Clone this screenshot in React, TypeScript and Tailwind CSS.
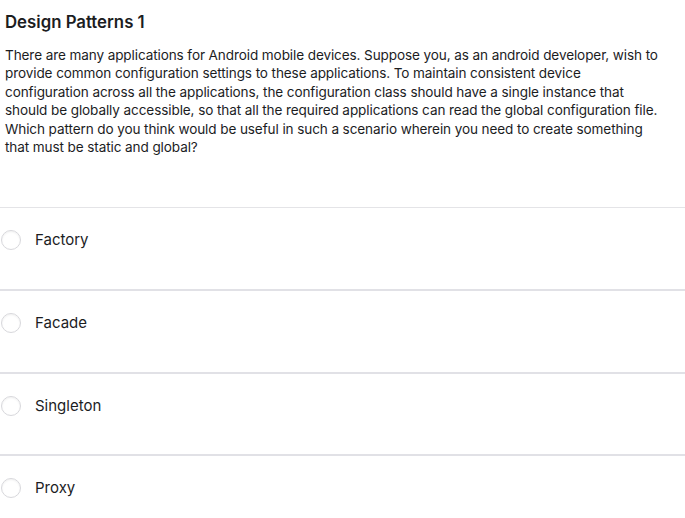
import React from 'react';

const options = ['Factory', 'Facade', 'Singleton', 'Proxy'];

const lines = [
  'There are many applications for Android mobile devices. Suppose you, as an android developer, wish to',
  'provide common configuration settings to these applications. To maintain consistent device',
  'configuration across all the applications, the configuration class should have a single instance that',
  'should be globally accessible, so that all the required applications can read the global configuration file.',
  'Which pattern do you think would be useful in such a scenario wherein you need to create something',
  'that must be static and global?',
];

const App: React.FC = () => {
  return (
    <div className="w-[685px] h-[518px] overflow-hidden bg-white text-[#1c1d1f] font-['Inter',sans-serif]">
      <div className="px-[5px] pt-[12px]">
        <h1 className="text-[16.8px] font-semibold leading-[20px]">Design Patterns 1</h1>
        <p className="mt-[14px] text-[13.55px] leading-[18.4px] tracking-[-0.1px]">
          {lines.map((l) => (
            <span key={l} className="block whitespace-nowrap">
              {l}
            </span>
          ))}
        </p>
      </div>
      <div className="mt-[51px] border-t border-[#e4e4e7]">
        {options.map((opt, i) => (
          <div
            key={opt}
            className={`flex items-start pt-[22px] h-[82.6px] ${i < options.length - 1 ? 'border-b-2 border-[#e1e1e6]' : ''}`}
          >
            <span className="ml-[1px] w-[20px] h-[20px] rounded-full border border-[#d8d8dc] bg-white shadow-[inset_0_1px_2px_rgba(0,0,0,0.06)]" />
            <span className="ml-[14px] text-[15px] leading-[20px]">{opt}</span>
          </div>
        ))}
      </div>
    </div>
  );
};

export default App;
